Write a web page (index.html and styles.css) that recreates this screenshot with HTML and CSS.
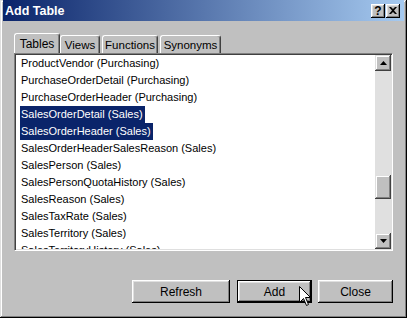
FILE: index.html
```html
<!DOCTYPE html>
<html lang="en">

<head>
    <meta charset="UTF-8">
    <title>Add Table</title>
    <link rel="stylesheet" href="styles.css">
</head>

<body>

    <div class="window">
        <div class="titlebar">
            <span class="title">Add Table</span>
            <div class="title-buttons">
                <span class="title-btn">?</span>
                <span class="title-btn">
                    <svg width="8" height="7" viewBox="0 0 8 7"><path d="M0 0h2l2 2 2-2h2L5 3.5 8 7H6L4 5 2 7H0l3-3.5z" fill="#000"/></svg>
                </span>
            </div>
        </div>

        <div class="content">
            <div class="tabs">
                <div class="tab tab-active tab-tables">Tables</div>
                <div class="tab tab-views">Views</div>
                <div class="tab tab-functions">Functions</div>
                <div class="tab tab-synonyms">Synonyms</div>
            </div>

            <div class="listbox">
                <div class="items">
                    <div class="item"><span>ProductVendor (Purchasing)</span></div>
                    <div class="item"><span>PurchaseOrderDetail (Purchasing)</span></div>
                    <div class="item"><span>PurchaseOrderHeader (Purchasing)</span></div>
                    <div class="item selected"><span>SalesOrderDetail (Sales)</span></div>
                    <div class="item selected"><span>SalesOrderHeader (Sales)</span></div>
                    <div class="item"><span>SalesOrderHeaderSalesReason (Sales)</span></div>
                    <div class="item"><span>SalesPerson (Sales)</span></div>
                    <div class="item"><span>SalesPersonQuotaHistory (Sales)</span></div>
                    <div class="item"><span>SalesReason (Sales)</span></div>
                    <div class="item"><span>SalesTaxRate (Sales)</span></div>
                    <div class="item"><span>SalesTerritory (Sales)</span></div>
                    <div class="item"><span>SalesTerritoryHistory (Sales)</span></div>
                </div>
                <div class="scrollbar">
                    <div class="sb-btn">
                        <svg width="7" height="4" viewBox="0 0 7 4"><path d="M3.5 0L7 4H0z" fill="#000"/></svg>
                    </div>
                    <div class="sb-track sb-track-top"></div>
                    <div class="sb-thumb"></div>
                    <div class="sb-track sb-track-bottom"></div>
                    <div class="sb-btn">
                        <svg width="7" height="4" viewBox="0 0 7 4"><path d="M0 0h7L3.5 4z" fill="#000"/></svg>
                    </div>
                </div>
            </div>

            <div class="buttons">
                <button class="btn btn-refresh">Refresh</button>
                <button class="btn btn-default">Add</button>
                <button class="btn">Close</button>
            </div>
        </div>

        <svg class="cursor" width="13" height="21" viewBox="0 0 13 21">
            <path d="M0.5 0.5V16.5L4.5 12.5L7.5 19.5L9.5 18.5L6.5 11.5H11.5Z" fill="#fff" stroke="#000" stroke-width="1"/>
        </svg>
    </div>

</body>

</html>
```

FILE: styles.css
```css
body {
    margin: 0;
    font-family: 'Liberation Sans', Arial, sans-serif;
    font-size: 11px;
    color: #000;
    background-color: #c0c0c0;
}

.window {
    position: relative;
    width: 407px;
    height: 318px;
    box-sizing: border-box;
    padding: 0 3px 3px;
    background-color: #c0c0c0;
    box-shadow: inset -1px -1px #000, inset 1px 1px #dfdfdf, inset -2px -2px #808080, inset 2px 2px #fff;
    overflow: hidden;
}

.titlebar {
    height: 21px;
    display: flex;
    align-items: center;
    justify-content: space-between;
    padding: 0 4px 0 2px;
    background: linear-gradient(to right, #0a246a, #a6caf0);
}

.title {
    color: #fff;
    font-weight: bold;
    font-size: 12.5px;
}

.title-buttons {
    display: flex;
    gap: 1px;
}

.title-btn {
    width: 14px;
    height: 14px;
    display: flex;
    align-items: center;
    justify-content: center;
    background-color: #c0c0c0;
    font-weight: bold;
    font-size: 12px;
    box-shadow: inset -1px -1px #000, inset 1px 1px #fff, inset -2px -2px #808080, inset 2px 2px #dfdfdf;
}

.content {
    padding: 12px 11px 0;
}

.tabs {
    display: flex;
    align-items: flex-end;
    height: 20px;
}

.tab {
    height: 18px;
    box-sizing: border-box;
    display: flex;
    align-items: center;
    justify-content: center;
    font-size: 11.5px;
    border-left: 1px solid #fff;
    border-top: 1px solid #fff;
    border-right: 1px solid #404040;
    border-radius: 3px 3px 0 0;
    box-shadow: inset -1px 0 #808080;
}

.tab-active {
    height: 20px;
    font-size: 12px;
    position: relative;
    z-index: 1;
}

.tab-tables { width: 46px; }
.tab-views { width: 40px; }
.tab-functions { width: 56px; margin-left: 2px; }
.tab-synonyms { width: 61px; margin-left: 2px; }

.listbox {
    width: 379px;
    height: 198px;
    box-sizing: border-box;
    display: flex;
    background-color: #fff;
    border-top: 1px solid #808080;
    border-left: 1px solid #808080;
    border-right: 1px solid #fff;
    border-bottom: 1px solid #fff;
    box-shadow: inset 1px 1px #404040, inset -1px -1px #dfdfdf;
    padding: 1px;
}

.items {
    flex: 1;
    overflow: hidden;
    padding-left: 4px;
}

.item {
    height: 17px;
    line-height: 17px;
    white-space: nowrap;
}

.item span {
    padding: 0 2px 0 1px;
    display: inline-block;
}

.item.selected span {
    background-color: #0a246a;
    color: #fff;
}

.scrollbar {
    width: 16px;
    display: flex;
    flex-direction: column;
}

.sb-btn, .sb-thumb {
    background-color: #c0c0c0;
    box-shadow: inset -1px -1px #404040, inset 1px 1px #dfdfdf, inset -2px -2px #808080, inset 2px 2px #fff;
}

.sb-btn {
    height: 16px;
    display: flex;
    align-items: center;
    justify-content: center;
}

.sb-track {
    background-color: #e0e0e0;
}

.sb-track-top { height: 104px; }
.sb-track-bottom { flex: 1; }

.sb-thumb { height: 24px; }

.buttons {
    display: flex;
    justify-content: flex-end;
    gap: 6px;
    margin-top: 29px;
}

.btn {
    width: 75px;
    height: 23px;
    border: none;
    padding: 0;
    font-family: inherit;
    font-size: 12px;
    color: #000;
    background-color: #c0c0c0;
    box-shadow: inset -1px -1px #000, inset 1px 1px #fff, inset -2px -2px #808080, inset 2px 2px #dfdfdf;
}

.btn-refresh {
    width: 98px;
    margin-right: 1px;
}

.btn-default {
    border: 1px solid #000;
}

.cursor {
    position: absolute;
    left: 299px;
    top: 286px;
}
```
